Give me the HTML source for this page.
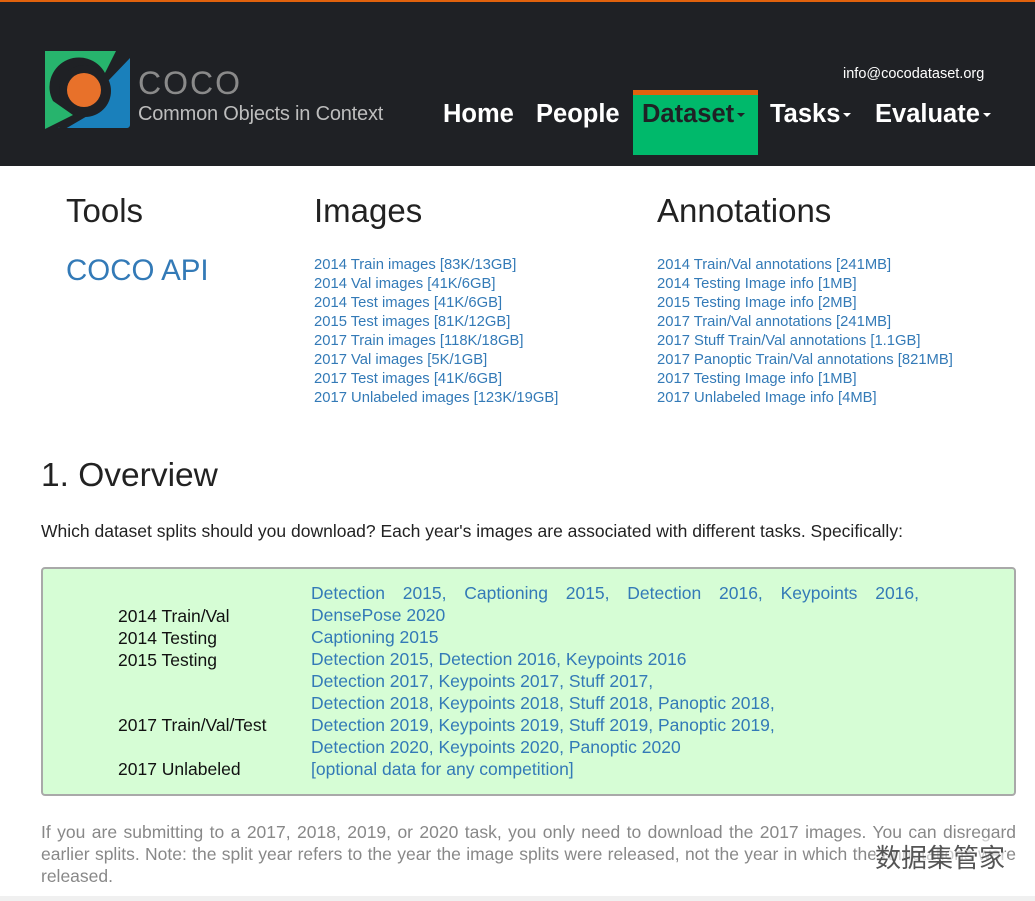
<!DOCTYPE html>
<html><head><meta charset="utf-8"><style>
body{margin:0;width:1035px;height:901px;overflow:hidden;background:#fff;font-family:"Liberation Sans",Arial,sans-serif;position:relative}
.hdr{position:absolute;left:0;top:0;width:1035px;height:166px;background:#1f2125;border-top:2px solid #e0620d;box-sizing:border-box}
.a{position:absolute;white-space:nowrap}
a,.lk{color:#337ab7;text-decoration:none}
.nav{font-weight:bold;font-size:25.5px;color:#fff;top:100px}
.car{display:inline-block;width:0;height:0;border-left:4px solid transparent;border-right:4px solid transparent;border-top:4px solid #fff;vertical-align:middle;margin-left:3px}
.list{font-size:14.8px;line-height:19px;color:#337ab7}
.box{position:absolute;left:41px;top:567px;width:975px;height:229px;box-sizing:border-box;background:#d6fdd5;border:2px solid #a9a9a9;border-radius:4px}
.row{position:absolute;font-size:17.5px;white-space:nowrap}
</style></head><body>
<div class="hdr"></div>
<svg class="a" style="left:43px;top:51px" width="90" height="78" viewBox="0 0 90 78">
<path d="M2 0 H73 L62 22 A28 28 0 0 0 10 50 L30 64 L2 78 Z" fill="#27b46d"/>
<path d="M87 7 V74 a3 3 0 0 1 -3 3 H15 L40 64 A28 28 0 0 0 65 30 Z" fill="#1a80bb"/>
<circle cx="42" cy="40" r="26" fill="#1f2125"/>
<circle cx="41" cy="39" r="17" fill="#e8712a"/>
<path d="M74 0 L60 26 L66 26 L80 0Z M40 62 L12 76 L22 78 L46 64Z" fill="#1f2125"/>
</svg>
<div class="a" style="left:138px;top:65px;font-size:32px;color:#8a8a8a;letter-spacing:2px">COCO</div>
<div class="a" style="left:138px;top:103px;font-size:20px;color:#bdbdbd;letter-spacing:-0.2px">Common Objects in Context</div>
<div class="a" style="left:843px;top:66px;font-size:14.5px;color:#fff">info@cocodataset.org</div>
<div class="a" style="left:633px;top:90px;width:125px;height:65px;background:#00b96b;border-top:5px solid #e0620d;box-sizing:border-box"></div>
<div class="a nav" style="left:443px">Home</div>
<div class="a nav" style="left:536px">People</div>
<div class="a nav" style="left:642px;color:#1f2125">Dataset<span class="car" style="border-top-color:#1f2125"></span></div>
<div class="a nav" style="left:770px">Tasks<span class="car"></span></div>
<div class="a nav" style="left:875px">Evaluate<span class="car"></span></div>

<div class="a" style="left:66px;top:192px;font-size:33px;color:#222">Tools</div>
<div class="a lk" style="left:66px;top:254px;font-size:29.5px">COCO API</div>
<div class="a" style="left:314px;top:192px;font-size:33px;color:#222">Images</div>
<div class="a" style="left:657px;top:192px;font-size:33px;color:#222">Annotations</div>
<div class="a list" style="left:314px;top:256px">2014 Train images [83K/13GB]<br>2014 Val images [41K/6GB]<br>2014 Test images [41K/6GB]<br>2015 Test images [81K/12GB]<br>2017 Train images [118K/18GB]<br>2017 Val images [5K/1GB]<br>2017 Test images [41K/6GB]<br>2017 Unlabeled images [123K/19GB]</div>
<div class="a list" style="left:657px;top:256px">2014 Train/Val annotations [241MB]<br>2014 Testing Image info [1MB]<br>2015 Testing Image info [2MB]<br>2017 Train/Val annotations [241MB]<br>2017 Stuff Train/Val annotations [1.1GB]<br>2017 Panoptic Train/Val annotations [821MB]<br>2017 Testing Image info [1MB]<br>2017 Unlabeled Image info [4MB]</div>

<div class="a" style="left:41px;top:457px;font-size:33.5px;color:#222">1. Overview</div>
<div class="a" style="left:41px;top:521px;font-size:17.5px;color:#222">Which dataset splits should you download? Each year's images are associated with different tasks. Specifically:</div>

<div class="box"></div>
<div class="row" style="left:118px;top:605px;color:#111;line-height:22px">2014 Train/Val<br>2014 Testing<br>2015 Testing</div>
<div class="row" style="left:118px;top:715px;color:#111">2017 Train/Val/Test</div>
<div class="row" style="left:118px;top:759px;color:#111">2017 Unlabeled</div>
<div class="row lk" style="left:311px;top:582px;line-height:22px">
<span style="display:inline-block;width:608px;text-align:justify;text-align-last:justify">Detection 2015, Captioning 2015, Detection 2016, Keypoints 2016,</span><br>
DensePose 2020<br>Captioning 2015<br>Detection 2015, Detection 2016, Keypoints 2016<br>Detection 2017, Keypoints 2017, Stuff 2017,<br>Detection 2018, Keypoints 2018, Stuff 2018, Panoptic 2018,<br>Detection 2019, Keypoints 2019, Stuff 2019, Panoptic 2019,<br>Detection 2020, Keypoints 2020, Panoptic 2020<br>[optional data for any competition]</div>

<div class="a" style="left:41px;top:821px;width:975px;font-size:17.5px;line-height:22px;color:#888;white-space:normal;text-align:justify">If you are submitting to a 2017, 2018, 2019, or 2020 task, you only need to download the 2017 images. You can disregard earlier splits. Note: the split year refers to the year the image splits were released, not the year in which the annotations were released.</div>
<div class="a" style="left:875px;top:838px;font-size:26px;color:#555;font-family:'Liberation Sans','Noto Sans CJK SC',sans-serif;background:rgba(255,255,255,0.6)">数据集管家</div>
<div class="a" style="left:0;top:896px;width:1035px;height:5px;background:#f0f0f0"></div>
</body></html>
